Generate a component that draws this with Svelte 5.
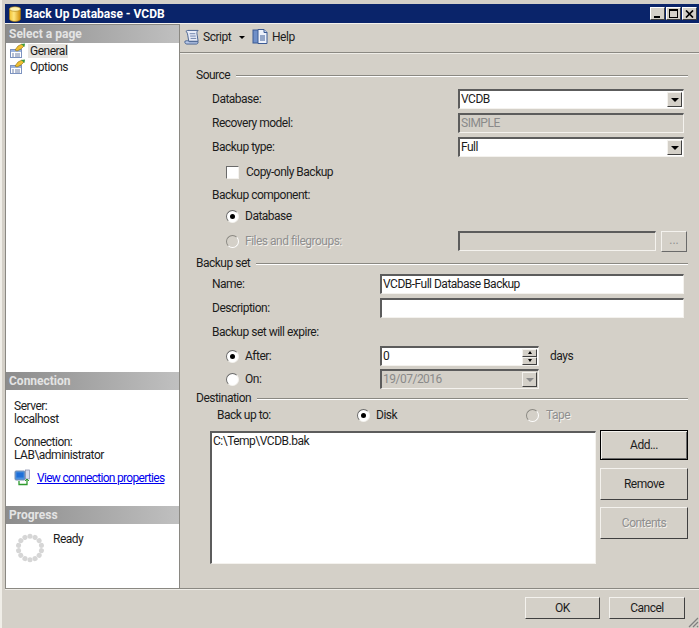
<script lang="ts">
  const pages = ["General", "Options"];
  const spinnerDots = Array.from({ length: 14 }, (_, i) => (i * 360) / 14);
  let backupType = "Full";
</script>

{#snippet pageIcon()}
  <svg class="icon" viewBox="0 0 16 16" width="16" height="16">
    <rect x="1.500" y="6.500" width="11" height="8" fill="#fff" stroke="#7d93c0" />
    <rect x="2" y="7" width="10" height="2" fill="#9db4de" />
    <path d="M3 11h2M6 11h5M3 13h2M6 13h5" stroke="#6f80a8" />
    <path d="M6 7 L9 3 L13 1 L15 3 L12 6 L8 8 Z" fill="#f0c030" stroke="#8a6a10" stroke-width="0.6" />
    <path d="M12 1 L16 0.500 L15.500 4 Z" fill="#3f9a3f" />
  </svg>
{/snippet}

{#snippet combo(value, disabled = false)}
  <div class="input combo" class:off={disabled}>
    <span class="value">{value}</span>
    <span class="drop"><i></i></span>
  </div>
{/snippet}

{#snippet radio(checked = false, disabled = false)}
  <span class="radio" class:off={disabled}>
    {#if checked}<i></i>{/if}
  </span>
{/snippet}

<div class="window">
  <header class="titlebar">
    <svg class="dbicon" viewBox="0 0 12 16" width="12" height="16">
      <defs>
        <linearGradient id="cyl" x1="0" x2="1" y1="0" y2="0">
          <stop offset="0" stop-color="#f0c030" />
          <stop offset="0.4" stop-color="#ffe680" />
          <stop offset="1" stop-color="#d08c08" />
        </linearGradient>
      </defs>
      <path d="M0.500 3v10c0 1.500 2.500 2.500 5.500 2.500s5.500-1 5.500-2.500V3z" fill="url(#cyl)" stroke="#a87808" stroke-width="0.6" />
      <ellipse cx="6" cy="3" rx="5.500" ry="2.300" fill="#fff3b0" stroke="#a87808" stroke-width="0.6" />
    </svg>
    <span class="title">Back Up Database - VCDB</span>
    <div class="winbtns">
      <button aria-label="Minimize"><i class="min"></i></button>
      <button aria-label="Maximize"><i class="max"></i></button>
      <button aria-label="Close">
        <svg viewBox="0 0 9 8" width="9" height="8"><path d="M1 0.500l7 7M8 0.500l-7 7" stroke="#000" stroke-width="1.700" /></svg>
      </button>
    </div>
  </header>

  <div class="body">
    <aside class="side">
      <h2 class="sidehead">Select a page</h2>
      <ul class="pages">
        {#each pages as page, i}
          <li>
            {@render pageIcon()}
            <span class:current={i === 0}>{page}</span>
          </li>
        {/each}
      </ul>

      <h2 class="sidehead">Connection</h2>
      <div class="conn">
        <p>Server:<br />localhost</p>
        <p>Connection:<br />LAB\administrator</p>
        <div class="connlink">
          <svg viewBox="0 0 17 17" width="17" height="17">
            <rect x="1" y="2" width="10" height="9" rx="1" fill="#4a90e0" stroke="#7b8fb0" />
            <rect x="2.500" y="3.500" width="7" height="5" fill="#1f6fd8" />
            <rect x="11.500" y="1" width="4" height="9" fill="#d8dcec" stroke="#8088a8" stroke-width="0.7" />
            <path d="M5 12v3.500h8V11" fill="none" stroke="#2e9a2e" stroke-width="1.300" />
            <path d="M11 12l2-2 2 2" fill="none" stroke="#2e9a2e" />
          </svg>
          <a href="#props">View connection properties</a>
        </div>
      </div>

      <h2 class="sidehead">Progress</h2>
      <div class="progress">
        <svg viewBox="0 0 32 32" width="30" height="30">
          {#each spinnerDots as deg}
            <circle cx="16" cy="3.500" r="2.700" fill="#d6d6d6" transform="rotate({deg} 16 16)" />
          {/each}
        </svg>
        <span>Ready</span>
      </div>
    </aside>

    <main class="main">
      <div class="toolbar">
        <svg viewBox="0 0 17 17" width="16" height="16">
          <path d="M4 1.500h11c-1.500 1-1.500 3-1 5l1 6.500H5L4 6.500C3.700 4.500 3 3 2 2.500z" fill="#e8ecf8" stroke="#44608f" />
          <path d="M1 13c2-1 4-0.500 4.500 0.500l9.500 0c0 2-1 2.500-2 2.500H3c-1.500 0-2.500-1.500-2-3z" fill="#b8c8e8" stroke="#44608f" />
          <path d="M6 5h6M6.500 7.500h6M7 10h6" stroke="#6a7fa8" />
        </svg>
        <span class="toollabel">Script</span>
        <i class="caret"></i>
        <svg class="helpicon" viewBox="0 0 17 17" width="17" height="17">
          <rect x="1" y="2" width="7" height="13" fill="#6f8fc8" stroke="#3b5a94" />
          <path d="M6 1.500h6l3 3v11H6z" fill="#eef2fb" stroke="#3b5a94" />
          <path d="M12 1.500v3h3" fill="#c4d2ec" stroke="#3b5a94" />
          <path d="M8 8h5M8 10h5M8 12h5" stroke="#3b5a94" />
        </svg>
        <span class="toollabel">Help</span>
      </div>

      <form class="form">
        <div class="heading source"><span>Source</span></div>

        <div class="row field first">
          <span class="indent">Database:</span>
          {@render combo("VCDB")}
        </div>
        <div class="row field">
          <span class="indent">Recovery model:</span>
          <div class="input off"><span class="value">SIMPLE</span></div>
        </div>
        <div class="row field">
          <span class="indent">Backup type:</span>
          {@render combo(backupType)}
        </div>

        <div class="row copyonly">
          <span class="check"></span>
          <span>Copy-only Backup</span>
        </div>
        <div class="row component"><span class="indent">Backup component:</span></div>
        <div class="row option dbopt">
          {@render radio(true)}
          <span>Database</span>
        </div>
        <div class="row option files">
          {@render radio(false, true)}
          <span class="muted">Files and filegroups:</span>
          <div class="input off filebox"></div>
          <button type="button" class="dots" disabled>...</button>
        </div>

        <div class="heading backupset"><span>Backup set</span></div>
        <div class="row named nameline">
          <span class="indent">Name:</span>
          <div class="input"><span class="value">VCDB-Full Database Backup</span></div>
        </div>
        <div class="row named">
          <span class="indent">Description:</span>
          <div class="input"></div>
        </div>
        <div class="row"><span class="indent">Backup set will expire:</span></div>
        <div class="row option">
          {@render radio(true)}
          <span class="expire">After:</span>
          <div class="input short">
            <span class="value">0</span>
            <span class="spin"><b><i class="up"></i></b><b><i class="down"></i></b></span>
          </div>
          <span class="days">days</span>
        </div>
        <div class="row option online">
          {@render radio()}
          <span class="expire">On:</span>
          <div class="short">{@render combo("19/07/2016", true)}</div>
        </div>

        <div class="heading destination"><span>Destination</span></div>
        <div class="backupto">
          <span class="to">Back up to:</span>
          {@render radio(true)}
          <span class="disk">Disk</span>
          {@render radio(false, true)}
          <span class="muted tape">Tape</span>
        </div>

        <div class="dest">
          <div class="input list"><span class="value">C:\Temp\VCDB.bak</span></div>
          <div class="destbtns">
            <button type="button" class="btn default">Add...</button>
            <button type="button" class="btn remove">Remove</button>
            <button type="button" class="btn contents" disabled>Contents</button>
          </div>
        </div>
      </form>
    </main>
  </div>

  <footer class="footer">
    <button type="button" class="btn ok">OK</button>
    <button type="button" class="btn ok">Cancel</button>
    <svg class="grip" viewBox="0 0 12 12" width="12" height="12">
      <path d="M11 2L2 11M11 6L6 11M11 10L10 11" stroke="#808080" stroke-width="1.300" />
    </svg>
  </footer>
</div>

<style>
  :global(body) {
    margin: 0;
    background: #d4d0c8;
  }

  .window {
    position: relative;
    width: 699px;
    height: 628px;
    box-sizing: border-box;
    padding: 4px 0 0 3px;
    display: flex;
    flex-direction: column;
    overflow: hidden;
    background: #d4d0c8;
    color: #1c1c1c;
    font: 12px/16px Roboto, "Liberation Sans", Arial, sans-serif;
    letter-spacing: -0.5px;
    border-left: 2px solid #f0eee8;
  }

  .titlebar {
    height: 19px;
    flex: none;
    display: flex;
    align-items: center;
    background: #0a246a;
    color: #fff;
    padding-left: 4px;
    border-bottom: 1px solid #f4f2ee;
  }

  .dbicon {
    margin-right: 4px;
  }

  .title {
    font-weight: bold;
    font-size: 12px;
    letter-spacing: 0;
  }

  .winbtns {
    margin-left: auto;
    display: flex;
    gap: 1px;
    padding-right: 2px;
  }

  .winbtns button {
    width: 15px;
    height: 13px;
    padding: 0;
    display: flex;
    align-items: center;
    justify-content: center;
    position: relative;
    background: #d4d0c8;
    border: 1px solid;
    border-color: #fff #404040 #404040 #fff;
  }

  .min {
    position: absolute;
    left: 3px;
    bottom: 1px;
    width: 6px;
    height: 2px;
    background: #000;
  }

  .max {
    width: 9px;
    height: 9px;
    border: 1px solid #000;
    border-top-width: 2px;
    box-sizing: border-box;
  }

  .body {
    flex: 1;
    display: flex;
    min-height: 0;
    border-bottom: 1px solid #8a8882;
    box-shadow: 0 1px 0 #efede8;
  }

  .side {
    width: 173px;
    flex: none;
    display: flex;
    flex-direction: column;
    background: #fff;
    border-left: 1px solid #8a8882;
    border-right: 1px solid #8a8882;
    border-top: 1px solid #8a8882;
  }

  .sidehead {
    margin: 0;
    height: 18px;
    flex: none;
    padding-left: 3px;
    font-size: 12px;
    line-height: 18px;
    font-weight: bold;
    letter-spacing: 0;
    color: #e4e4e4;
    background: linear-gradient(to right, #8c8c8c, #c0c0c0);
  }

  .pages {
    list-style: none;
    margin: 0;
    padding: 0 0 0 3px;
    flex: 1;
  }

  .pages li {
    height: 16px;
    display: flex;
    align-items: center;
    gap: 3px;
  }

  .pages span {
    padding: 0 1px 0 2px;
    line-height: 14px;
  }

  .pages .current {
    background: #e6e4e0;
  }

  .conn {
    height: 116px;
    flex: none;
    box-sizing: border-box;
    padding: 10px 0 0 8px;
  }

  .conn p {
    margin: 0 0 10px;
    line-height: 13px;
  }

  .connlink {
    display: flex;
    align-items: center;
    gap: 6px;
    margin-top: -3px;
    white-space: nowrap;
  }

  .connlink svg {
    flex: none;
  }

  .connlink a {
    color: #0000ee;
    letter-spacing: -0.7px;
  }

  .progress {
    height: 64px;
    flex: none;
    box-sizing: border-box;
    display: flex;
    align-items: flex-start;
    gap: 8px;
    padding: 7px 0 0 9px;
  }

  .progress svg {
    margin-top: 2px;
  }

  .main {
    flex: 1;
    min-width: 0;
    display: flex;
    flex-direction: column;
  }

  .toolbar {
    height: 29px;
    flex: none;
    box-sizing: border-box;
    display: flex;
    align-items: center;
    gap: 3px;
    padding: 0 0 3px 4px;
    border-bottom: 1px solid #8a8882;
    box-shadow: 0 1px 0 #efede8;
  }

  .caret {
    width: 0;
    height: 0;
    margin: 1px 0 0 5px;
    border: 3px solid transparent;
    border-top: 3px solid #000;
    border-bottom: 0;
  }

  .helpicon {
    margin-left: 4px;
  }

  .form {
    padding: 12px 11px 0 16px;
  }

  .row {
    height: 20px;
    display: flex;
    align-items: center;
    margin-top: 4px;
  }

  .indent {
    margin-left: 16px;
  }

  .heading {
    height: 20px;
    display: flex;
    align-items: center;
    gap: 6px;
  }

  .heading::after {
    content: "";
    flex: 1;
    height: 1px;
    background: #8a8882;
    box-shadow: 0 1px 0 #fff;
  }

  .field .indent {
    width: 246px;
    flex: none;
  }

  .input {
    position: relative;
    flex: 1;
    height: 20px;
    box-sizing: border-box;
    display: flex;
    align-items: center;
    background: #fff;
    margin-right: 4px;
    border-style: solid;
    border-width: 2px 1px 1px 2px;
    border-color: #5c5c5c #f4f2ee #f4f2ee #5c5c5c;
  }

  .input.off {
    background: #d4d0c8;
    color: #8a8a8a;
  }

  .value {
    padding: 0 0 2px 1px;
  }

  .drop {
    margin-left: auto;
    width: 15px;
    height: 15px;
    margin-right: 1px;
    box-sizing: border-box;
    display: flex;
    align-items: center;
    justify-content: center;
    background: #d4d0c8;
    border: 1px solid;
    border-color: #f4f2ee #404040 #404040 #f4f2ee;
  }

  .drop i {
    width: 0;
    height: 0;
    border: 4px solid transparent;
    border-top: 4px solid #000;
    border-bottom: 0;
  }

  .off .drop i {
    border-top-color: #8a8a8a;
  }

  .copyonly {
    margin-top: 5px;
    margin-left: 30px;
    gap: 7px;
  }

  .check {
    width: 13px;
    height: 13px;
    box-sizing: border-box;
    background: #fff;
    border-style: solid;
    border-width: 1px;
    border-color: #6a6a6a #f4f2ee #f4f2ee #6a6a6a;
  }

  .component {
    margin-top: 3px;
  }

  .option {
    margin-left: 30px;
  }

  .dbopt {
    margin-top: 1px;
  }

  .files {
    margin-top: 5px;
  }

  .radio {
    width: 13px;
    height: 13px;
    flex: none;
    box-sizing: border-box;
    display: inline-flex;
    align-items: center;
    justify-content: center;
    border-radius: 50%;
    background: #fff;
    border: 1px solid;
    border-color: #6a6a6a #f4f2ee #f4f2ee #6a6a6a;
  }

  .option .radio {
    margin-right: 6px;
  }

  .radio.off {
    background: #d4d0c8;
    border-color: #8a8882 #fff #fff #8a8882;
  }

  .radio i {
    width: 5px;
    height: 5px;
    border-radius: 50%;
    background: #000;
  }

  .muted {
    color: #8f8f8f;
    text-shadow: 1px 1px 0 #f4f2ee;
  }

  .filebox {
    flex: none;
    width: 198px;
    margin: 0 0 0 auto;
  }

  .dots {
    width: 26px;
    height: 21px;
    margin: 0 1px 0 5px;
    padding: 0 0 4px;
    font: inherit;
    color: #8f8f8f;
    background: #d4d0c8;
    border: 1px solid;
    border-color: #f4f2ee #6a6a6a #6a6a6a #f4f2ee;
  }

  .backupset {
    margin-top: 2px;
  }

  .nameline {
    margin-top: 1px;
  }

  .named .indent {
    width: 168px;
    flex: none;
  }

  .expire {
    width: 135px;
    flex: none;
  }

  .short {
    flex: none;
    width: 159px;
    margin: 0;
    display: flex;
  }

  .short .input {
    margin: 0;
  }

  .online {
    margin-top: 3px;
  }

  .spin {
    margin-left: auto;
    margin-right: 1px;
    width: 15px;
    display: flex;
    flex-direction: column;
  }

  .spin b {
    height: 8px;
    box-sizing: border-box;
    display: flex;
    align-items: center;
    justify-content: center;
    background: #d4d0c8;
    border: 1px solid;
    border-color: #f4f2ee #404040 #404040 #f4f2ee;
  }

  .spin i {
    width: 0;
    height: 0;
    border: 2.500px solid transparent;
  }

  .spin .up {
    border-top: 0;
    border-bottom: 3px solid #000;
  }

  .spin .down {
    border-bottom: 0;
    border-top: 3px solid #000;
  }

  .days {
    margin-left: 11px;
  }

  .destination {
    margin-top: 1px;
    height: 16px;
  }

  .backupto {
    height: 16px;
    margin-top: 1px;
    display: flex;
    align-items: center;
  }

  .to {
    margin-left: 21px;
    width: 140px;
  }

  .disk {
    margin: 0 0 0 6px;
    width: 150px;
  }

  .tape {
    margin-left: 7px;
  }

  .dest {
    margin-top: 8px;
    display: flex;
  }

  .list {
    flex: none;
    width: 386px;
    height: 133px;
    margin: 0 0 0 14px;
    align-items: flex-start;
    padding: 0;
  }

  .destbtns {
    margin-left: 4px;
    display: flex;
    flex-direction: column;
  }

  .btn {
    font: inherit;
    letter-spacing: inherit;
    color: #1c1c1c;
    padding: 0;
    background: #d4d0c8;
    border: 1px solid;
    border-color: #f4f2ee #404040 #404040 #f4f2ee;
  }

  .destbtns .btn {
    width: 88px;
  }

  .default {
    height: 30px;
    margin-top: -1px;
    border: 1px solid #000;
    box-shadow: inset 1px 1px 0 #f4f2ee, inset -1px -1px 0 #6a6a6a;
  }

  .remove {
    height: 32px;
    margin-top: 8px;
  }

  .contents {
    height: 32px;
    margin-top: 7px;
    color: #8f8f8f;
    text-shadow: 1px 1px 0 #f4f2ee;
  }

  .footer {
    height: 39px;
    flex: none;
    display: flex;
    justify-content: flex-end;
    align-items: flex-start;
    gap: 9px;
    padding: 8px 14px 0 0;
    box-sizing: border-box;
  }

  .ok {
    width: 75px;
    height: 22px;
  }

  .ok + .ok {
    width: 76px;
  }

  .grip {
    position: absolute;
    right: 0;
    bottom: 0;
  }
</style>
